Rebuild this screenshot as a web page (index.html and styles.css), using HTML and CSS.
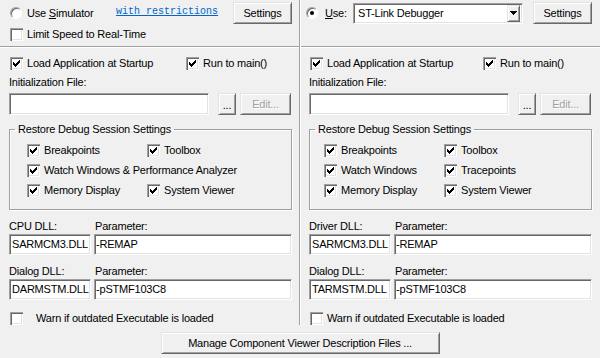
FILE: index.html
```html
<!DOCTYPE html>
<html>
<head>
<meta charset="utf-8">
<link rel="stylesheet" href="styles.css">
</head>
<body>
<div class="dialog">
  <div class="panels">
    <section class="panel panel-left">
      <div class="top">
        <div class="row row-first">
          <label class="opt opt-sim"><span class="radio"></span><span>Use <u>S</u>imulator</span></label>
          <a class="link">with restrictions</a>
          <button class="btn btn-settings">Settings</button>
        </div>
        <div class="row row-limit">
          <label class="opt"><span class="check"></span><span>Limit Speed to Real-Time</span></label>
        </div>
      </div>
      <div class="sep"></div>
      <div class="main">
        <div class="row row-load">
          <label class="opt opt-load"><span class="check"><svg width="13" height="13" viewBox="0 0 13 13" shape-rendering="crispEdges"><path d="M9 3h1v1h-1zM8 4h2v1h-2zM3 5h1v1h-1zM7 5h3v1h-3zM3 6h2v1h-2zM6 6h3v1h-3zM3 7h5v1h-5zM4 8h3v1h-3zM5 9h1v1h-1z"/></svg></span><span>Load Application at Startup</span></label>
          <label class="opt"><span class="check"><svg width="13" height="13" viewBox="0 0 13 13" shape-rendering="crispEdges"><path d="M9 3h1v1h-1zM8 4h2v1h-2zM3 5h1v1h-1zM7 5h3v1h-3zM3 6h2v1h-2zM6 6h3v1h-3zM3 7h5v1h-5zM4 8h3v1h-3zM5 9h1v1h-1z"/></svg></span><span>Run to main()</span></label>
        </div>
        <div class="lbl lbl-init">Initialization File:</div>
        <div class="row row-file">
          <span class="field field-file"></span>
          <button class="btn btn-dots">...</button>
          <button class="btn btn-edit" disabled>Edit...</button>
        </div>
        <fieldset class="group">
          <legend>Restore Debug Session Settings</legend>
          <div class="group-grid">
            <label class="opt"><span class="check"><svg width="13" height="13" viewBox="0 0 13 13" shape-rendering="crispEdges"><path d="M9 3h1v1h-1zM8 4h2v1h-2zM3 5h1v1h-1zM7 5h3v1h-3zM3 6h2v1h-2zM6 6h3v1h-3zM3 7h5v1h-5zM4 8h3v1h-3zM5 9h1v1h-1z"/></svg></span><span>Breakpoints</span></label>
            <label class="opt"><span class="check"><svg width="13" height="13" viewBox="0 0 13 13" shape-rendering="crispEdges"><path d="M9 3h1v1h-1zM8 4h2v1h-2zM3 5h1v1h-1zM7 5h3v1h-3zM3 6h2v1h-2zM6 6h3v1h-3zM3 7h5v1h-5zM4 8h3v1h-3zM5 9h1v1h-1z"/></svg></span><span>Toolbox</span></label>
            <label class="opt span2"><span class="check"><svg width="13" height="13" viewBox="0 0 13 13" shape-rendering="crispEdges"><path d="M9 3h1v1h-1zM8 4h2v1h-2zM3 5h1v1h-1zM7 5h3v1h-3zM3 6h2v1h-2zM6 6h3v1h-3zM3 7h5v1h-5zM4 8h3v1h-3zM5 9h1v1h-1z"/></svg></span><span>Watch Windows &amp; Performance Analyzer</span></label>
            <label class="opt"><span class="check"><svg width="13" height="13" viewBox="0 0 13 13" shape-rendering="crispEdges"><path d="M9 3h1v1h-1zM8 4h2v1h-2zM3 5h1v1h-1zM7 5h3v1h-3zM3 6h2v1h-2zM6 6h3v1h-3zM3 7h5v1h-5zM4 8h3v1h-3zM5 9h1v1h-1z"/></svg></span><span>Memory Display</span></label>
            <label class="opt"><span class="check"><svg width="13" height="13" viewBox="0 0 13 13" shape-rendering="crispEdges"><path d="M9 3h1v1h-1zM8 4h2v1h-2zM3 5h1v1h-1zM7 5h3v1h-3zM3 6h2v1h-2zM6 6h3v1h-3zM3 7h5v1h-5zM4 8h3v1h-3zM5 9h1v1h-1z"/></svg></span><span>System Viewer</span></label>
          </div>
        </fieldset>
        <div class="dll">
          <div class="lbl">CPU DLL:</div>
          <div class="lbl lbl-param">Parameter:</div>
          <span class="field">SARMCM3.DLL</span>
          <span class="field field-param">-REMAP</span>
          <div class="lbl lbl-end">Dialog DLL:</div>
          <div class="lbl lbl-param lbl-end">Parameter:</div>
          <span class="field">DARMSTM.DLL</span>
          <span class="field field-param">-pSTMF103C8</span>
        </div>
        <div class="row row-warn">
          <label class="opt opt-warn-left"><span class="check"></span><span>Warn if outdated Executable is loaded</span></label>
        </div>
      </div>
    </section>
    <div class="vsep"></div>
    <section class="panel panel-right">
      <div class="top">
        <div class="row row-first">
          <label class="opt opt-use"><span class="radio on"><span class="dot"></span></span><span><u>U</u>se:</span></label>
          <div class="select">
            <span class="select-text">ST-Link Debugger</span>
            <span class="select-arrow"><svg width="7" height="4" viewBox="0 0 7 4" shape-rendering="crispEdges"><path d="M0 0h7v1h-7zM1 1h5v1h-5zM2 2h3v1h-3zM3 3h1v1h-1z"/></svg></span>
          </div>
          <button class="btn btn-settings">Settings</button>
        </div>
      </div>
      <div class="sep"></div>
      <div class="main">
        <div class="row row-load">
          <label class="opt opt-load opt-load-right"><span class="check"><svg width="13" height="13" viewBox="0 0 13 13" shape-rendering="crispEdges"><path d="M9 3h1v1h-1zM8 4h2v1h-2zM3 5h1v1h-1zM7 5h3v1h-3zM3 6h2v1h-2zM6 6h3v1h-3zM3 7h5v1h-5zM4 8h3v1h-3zM5 9h1v1h-1z"/></svg></span><span>Load Application at Startup</span></label>
          <label class="opt"><span class="check"><svg width="13" height="13" viewBox="0 0 13 13" shape-rendering="crispEdges"><path d="M9 3h1v1h-1zM8 4h2v1h-2zM3 5h1v1h-1zM7 5h3v1h-3zM3 6h2v1h-2zM6 6h3v1h-3zM3 7h5v1h-5zM4 8h3v1h-3zM5 9h1v1h-1z"/></svg></span><span>Run to main()</span></label>
        </div>
        <div class="lbl lbl-init">Initialization File:</div>
        <div class="row row-file">
          <span class="field field-file"></span>
          <button class="btn btn-dots">...</button>
          <button class="btn btn-edit" disabled>Edit...</button>
        </div>
        <fieldset class="group group-right">
          <legend>Restore Debug Session Settings</legend>
          <div class="group-grid">
            <label class="opt"><span class="check"><svg width="13" height="13" viewBox="0 0 13 13" shape-rendering="crispEdges"><path d="M9 3h1v1h-1zM8 4h2v1h-2zM3 5h1v1h-1zM7 5h3v1h-3zM3 6h2v1h-2zM6 6h3v1h-3zM3 7h5v1h-5zM4 8h3v1h-3zM5 9h1v1h-1z"/></svg></span><span>Breakpoints</span></label>
            <label class="opt"><span class="check"><svg width="13" height="13" viewBox="0 0 13 13" shape-rendering="crispEdges"><path d="M9 3h1v1h-1zM8 4h2v1h-2zM3 5h1v1h-1zM7 5h3v1h-3zM3 6h2v1h-2zM6 6h3v1h-3zM3 7h5v1h-5zM4 8h3v1h-3zM5 9h1v1h-1z"/></svg></span><span>Toolbox</span></label>
            <label class="opt"><span class="check"><svg width="13" height="13" viewBox="0 0 13 13" shape-rendering="crispEdges"><path d="M9 3h1v1h-1zM8 4h2v1h-2zM3 5h1v1h-1zM7 5h3v1h-3zM3 6h2v1h-2zM6 6h3v1h-3zM3 7h5v1h-5zM4 8h3v1h-3zM5 9h1v1h-1z"/></svg></span><span>Watch Windows</span></label>
            <label class="opt"><span class="check"><svg width="13" height="13" viewBox="0 0 13 13" shape-rendering="crispEdges"><path d="M9 3h1v1h-1zM8 4h2v1h-2zM3 5h1v1h-1zM7 5h3v1h-3zM3 6h2v1h-2zM6 6h3v1h-3zM3 7h5v1h-5zM4 8h3v1h-3zM5 9h1v1h-1z"/></svg></span><span>Tracepoints</span></label>
            <label class="opt"><span class="check"><svg width="13" height="13" viewBox="0 0 13 13" shape-rendering="crispEdges"><path d="M9 3h1v1h-1zM8 4h2v1h-2zM3 5h1v1h-1zM7 5h3v1h-3zM3 6h2v1h-2zM6 6h3v1h-3zM3 7h5v1h-5zM4 8h3v1h-3zM5 9h1v1h-1z"/></svg></span><span>Memory Display</span></label>
            <label class="opt"><span class="check"><svg width="13" height="13" viewBox="0 0 13 13" shape-rendering="crispEdges"><path d="M9 3h1v1h-1zM8 4h2v1h-2zM3 5h1v1h-1zM7 5h3v1h-3zM3 6h2v1h-2zM6 6h3v1h-3zM3 7h5v1h-5zM4 8h3v1h-3zM5 9h1v1h-1z"/></svg></span><span>System Viewer</span></label>
          </div>
        </fieldset>
        <div class="dll">
          <div class="lbl">Driver DLL:</div>
          <div class="lbl lbl-param">Parameter:</div>
          <span class="field">SARMCM3.DLL</span>
          <span class="field field-param">-REMAP</span>
          <div class="lbl lbl-end">Dialog DLL:</div>
          <div class="lbl lbl-param lbl-end">Parameter:</div>
          <span class="field">TARMSTM.DLL</span>
          <span class="field field-param">-pSTMF103C8</span>
        </div>
        <div class="row row-warn">
          <label class="opt"><span class="check"></span><span>Warn if outdated Executable is loaded</span></label>
        </div>
      </div>
    </section>
  </div>
  <div class="footer">
    <button class="btn btn-manage">Manage Component Viewer Description Files ...</button>
  </div>
</div>
</body>
</html>
```

FILE: styles.css
```css
* { box-sizing: border-box; }

html, body {
  margin: 0;
  padding: 0;
  background: #f0f0f0;
}

body {
  width: 600px;
  height: 358px;
  overflow: hidden;
  font-family: "Liberation Sans", Arial, sans-serif;
  font-size: 11px;
  letter-spacing: -0.2px;
  line-height: 13px;
  color: #000;
}

.dialog {
  width: 600px;
  height: 358px;
}

.panels {
  display: grid;
  grid-template-columns: 299px 2px 299px;
  height: 325px;
}

.vsep {
  border-left: 1px solid #a0a0a0;
  border-right: 1px solid #fff;
}

.top {
  height: 44px;
}

.panel-left .top { padding: 0 7px 0 10px; }
.panel-right .top { padding: 0 8px 0 5px; }

.sep {
  height: 2px;
  border-top: 1px solid #a0a0a0;
  border-bottom: 1px solid #fff;
}

.main { padding: 0 7px 0 9px; }
.panel-right .main { padding: 0 8px 0 8px; }

.row {
  display: flex;
  align-items: center;
}

.row-first {
  margin-top: 2px;
  height: 22px;
}

.row-limit {
  margin-top: 4px;
  height: 13px;
}

.opt {
  display: flex;
  align-items: center;
  gap: 4px;
  white-space: nowrap;
}

.opt-sim { width: 106px; gap: 5px; }
.opt-use { width: 47px; gap: 7px; }

.radio {
  width: 12px;
  height: 12px;
  border-radius: 50%;
  background: #fff;
  border: 1px solid;
  border-color: #a0a0a0 #fff #fff #a0a0a0;
  box-shadow: inset 1px 1px 0 #696969;
  display: flex;
  align-items: center;
  justify-content: center;
  flex: none;
}

.dot {
  width: 4px;
  height: 4px;
  border-radius: 50%;
  background: #000;
}

.link {
  font-family: "Liberation Mono", "Courier New", monospace;
  font-size: 10px;
  letter-spacing: 0;
  color: #0066cc;
  text-decoration: underline;
  align-self: flex-start;
  margin-top: 3px;
}

.btn {
  font: inherit;
  letter-spacing: inherit;
  color: #000;
  background: #f0f0f0;
  border: 1px solid;
  border-color: #e3e3e3 #696969 #696969 #e3e3e3;
  box-shadow: inset 1px 1px 0 #fff, inset -1px -1px 0 #a0a0a0;
  padding: 0;
  margin: 0;
  text-align: center;
}

.btn-settings {
  margin-left: auto;
  width: 59px;
  height: 22px;
}

.select {
  width: 170px;
  height: 21px;
  background: #fff;
  border: 1px solid;
  border-color: #a0a0a0 #fff #fff #a0a0a0;
  box-shadow: inset 1px 1px 0 #696969, inset -1px -1px 0 #e3e3e3;
  display: flex;
  align-items: center;
  padding: 2px 2px 2px 4px;
}

.select-text { flex: 1; }

.select-arrow {
  width: 13px;
  height: 17px;
  background: #f0f0f0;
  border: 1px solid;
  border-color: #e3e3e3 #696969 #696969 #e3e3e3;
  box-shadow: inset 1px 1px 0 #fff, inset -1px -1px 0 #a0a0a0;
  display: flex;
  align-items: center;
  justify-content: center;
}

.check {
  width: 13px;
  height: 13px;
  flex: none;
  background: #fff;
  box-shadow: inset 1px 1px 0 #a0a0a0, inset 2px 2px 0 #696969, inset -1px -1px 0 #fff, inset -2px -2px 0 #e3e3e3;
  display: block;
}

.check svg { display: block; fill: #000; }

.main .row .check { margin-left: 1px; }

.row-load {
  margin-top: 9px;
  height: 13px;
}

.opt-load { width: 176px; }
.opt-load-right { width: 173px; }

.lbl {
  line-height: 13px;
  white-space: nowrap;
}

.lbl-init { margin-top: 6px; }

.row-file {
  margin-top: 4px;
  height: 22px;
}

.field {
  display: flex;
  align-items: center;
  height: 21px;
  background: #fff;
  border: 1px solid;
  border-color: #a0a0a0 #fff #fff #a0a0a0;
  box-shadow: inset 1px 1px 0 #696969, inset -1px -1px 0 #e3e3e3;
  padding: 0 0 0 2px;
  white-space: nowrap;
  overflow: hidden;
}

.field-file {
  width: 200px;
  height: 22px;
}

.btn-dots {
  width: 18px;
  height: 22px;
  margin-left: 9px;
  padding-top: 3px;
}

.btn-edit {
  width: 51px;
  height: 22px;
  margin-left: 4px;
  color: #a0a0a0;
  text-shadow: 1px 1px 0 #fff;
}

.group {
  margin: 8px 0 0;
  padding: 4px 0 9px 5px;
  border: 1px solid #a0a0a0;
  box-shadow: inset 1px 1px 0 #fff, 1px 1px 0 #fff;
  min-width: 0;
}

.group legend {
  padding: 0 3px;
  line-height: 13px;
}

.group-grid {
  display: grid;
  grid-template-columns: 120px auto;
  grid-auto-rows: 20px;
  margin-left: 12px;
}

.group-right .group-grid { margin-left: 9px; }

.span2 { grid-column: span 2; }

.dll {
  margin-top: 10px;
  display: grid;
  grid-template-columns: 82px 1fr;
  grid-template-rows: 13px 21px 22px 21px;
  column-gap: 3px;
  row-gap: 1px;
}

.lbl-param { padding-left: 1px; }
.lbl-end { align-self: end; }

.dll .field { height: 21px; }
.field-param { padding-left: 1px; }

.row-warn {
  margin-top: 12px;
  height: 13px;
}

.opt-warn-left { gap: 13px; }

.footer {
  height: 33px;
  display: flex;
  justify-content: center;
  align-items: flex-start;
}

.btn-manage {
  margin-top: 7px;
  width: 279px;
  height: 22px;
}
```
